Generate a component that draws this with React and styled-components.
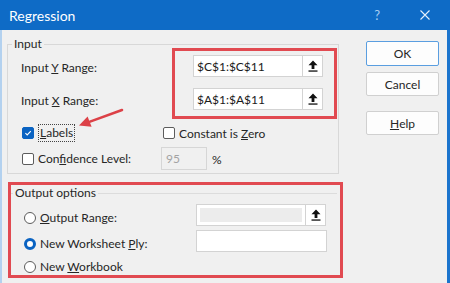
import React from 'react'
import styled, { createGlobalStyle } from 'styled-components'

const GlobalStyle = createGlobalStyle`
  html, body {
    margin: 0;
    padding: 0;
    background: #f0f0f0;
  }
  * {
    box-sizing: border-box;
  }
`

const UI_FONT = `Lato, 'Noto Sans', sans-serif`

export default function App() {
  return (
    <>
      <GlobalStyle />
      <Dialog>
        <TitleBar>
          <Title>Regression</Title>
          <TitleButtons>
            <HelpMark>?</HelpMark>
            <CloseMark viewBox="0 0 10 10">
              <path d="M0.5 0.5 L9.5 9.5 M9.5 0.5 L0.5 9.5" />
            </CloseMark>
          </TitleButtons>
        </TitleBar>
        <Body>
          <Main>
            <Group>
              <Legend>Input</Legend>
              <Rows $top={3} $bottom={3}>
                <Row>
                  <FieldLabel>Input <u>Y</u> Range:</FieldLabel>
                  <RefField value="$C$1:$C$11" />
                </Row>
                <Row $mt={11}>
                  <FieldLabel>Input <u>X</u> Range:</FieldLabel>
                  <RefField value="$A$1:$A$11" />
                </Row>
                <Row $mt={12} $h={22}>
                  <CheckItem $w={141}>
                    <CheckBox $checked>
                      <svg viewBox="0 0 10 10">
                        <path d="M2.4 5.2 L4.2 7 L7.8 3.2" />
                      </svg>
                    </CheckBox>
                    <FocusText><u>L</u>abels</FocusText>
                  </CheckItem>
                  <CheckItem>
                    <CheckBox />
                    <span>Constant is <u>Z</u>ero</span>
                  </CheckItem>
                </Row>
                <Row $mt={3} $h={23}>
                  <CheckItem $w={140}>
                    <CheckBox />
                    <span>Con<u>f</u>idence Level:</span>
                  </CheckItem>
                  <SmallBox>95</SmallBox>
                  <Percent>%</Percent>
                </Row>
              </Rows>
            </Group>

            <Highlight>
              <OutputGroup>
                <Legend $ml={2}>Output options</Legend>
                <Rows $top={3} $bottom={0}>
                  <Row $align="flex-end">
                    <RadioItem>
                      <Radio />
                      <span><u>O</u>utput Range:</span>
                    </RadioItem>
                    <RefField disabled />
                  </Row>
                  <Row $mt={4} $align="flex-end">
                    <RadioItem>
                      <Radio $checked />
                      <span>New Worksheet <u>P</u>ly:</span>
                    </RadioItem>
                    <TextBox $w={131} />
                  </Row>
                  <Row $mt={6} $h={17}>
                    <RadioItem>
                      <Radio />
                      <span>New <u>W</u>orkbook</span>
                    </RadioItem>
                  </Row>
                </Rows>
              </OutputGroup>
            </Highlight>
          </Main>

          <Side>
            <Button $default>OK</Button>
            <Button $mt={6}>Cancel</Button>
            <Button $mt={15}><u>H</u>elp</Button>
          </Side>

          <RedFrame />
          <Arrow viewBox="0 0 50 26">
            <path className="shaft" d="M46 6 L14 17.6" />
            <polygon points="3,21.5 15.6,22.8 11.6,12.6" />
          </Arrow>
        </Body>
      </Dialog>
    </>
  )
}

function RefField({ value, disabled }) {
  return (
    <FieldWrap>
      <TextBox $w={110}>
        {disabled ? <DisabledFill /> : value}
      </TextBox>
      <PickButton>
        <svg viewBox="0 0 10 12">
          <polygon points="5,0.5 9.5,5.2 6.4,5.2 6.4,9 3.6,9 3.6,5.2 0.5,5.2" />
          <rect x="0.5" y="10.4" width="9" height="1.3" />
        </svg>
      </PickButton>
    </FieldWrap>
  )
}

const Dialog = styled.div`
  width: 450px;
  height: 283px;
  display: flex;
  flex-direction: column;
  font-family: ${UI_FONT};
  font-size: 12px;
  color: #262626;
  background: #f0f0f0;
  overflow: hidden;
`

const TitleBar = styled.div`
  height: 30px;
  flex: none;
  display: flex;
  align-items: center;
  justify-content: space-between;
  background: #0e6bc6;
  color: #fff;
  padding-left: 9px;
`

const Title = styled.div`
  font-size: 14px;
`

const TitleButtons = styled.div`
  display: flex;
  align-items: center;
  gap: 40px;
  padding-right: 20px;
`

const HelpMark = styled.span`
  font-size: 13px;
  color: #a9cdf1;
`

const CloseMark = styled.svg`
  width: 10px;
  height: 10px;
  path {
    stroke: #e4f0fb;
    stroke-width: 1.1;
    fill: none;
  }
`

const Body = styled.div`
  flex: 1;
  position: relative;
  display: flex;
  border-left: 2px solid #b3d1ef;
  border-right: 3px solid #1b74cd;
`

const Main = styled.div`
  width: 341px;
  padding: 6px 0 0 5px;
  display: flex;
  flex-direction: column;
`

const Group = styled.fieldset`
  margin: 0;
  padding: 0;
  width: 332px;
  border: 1px solid #d8d8d8;
  min-width: 0;
`

const Legend = styled.legend`
  margin-left: ${p => p.$ml ?? 4}px;
  padding: 0 2px;
  line-height: 16px;
`

const Rows = styled.div`
  display: flex;
  flex-direction: column;
  padding: ${p => p.$top}px 0 ${p => p.$bottom}px 13px;
`

const Row = styled.div`
  display: flex;
  align-items: ${p => p.$align || 'center'};
  margin-top: ${p => p.$mt || 0}px;
  height: ${p => (p.$h ? `${p.$h}px` : 'auto')};
`

const FieldLabel = styled.div`
  width: 172px;
  padding-top: 2px;
`

const FieldWrap = styled.div`
  display: flex;
`

const TextBox = styled.div`
  width: ${p => p.$w}px;
  height: 22px;
  background: #fff;
  border: 1px solid #d3d3d3;
  padding: 0 3px;
  display: flex;
  align-items: center;
  color: #1a1a1a;
`

const DisabledFill = styled.div`
  flex: 1;
  height: 14px;
  background: #ececec;
`

const PickButton = styled.div`
  width: 21px;
  height: 22px;
  margin-left: -1px;
  background: #fff;
  border: 1px solid #d3d3d3;
  display: flex;
  align-items: center;
  justify-content: center;
  svg {
    width: 10px;
    height: 12px;
    fill: #111;
  }
`

const CheckItem = styled.label`
  display: flex;
  align-items: center;
  width: ${p => (p.$w ? `${p.$w}px` : 'auto')};
  padding-left: 1px;
`

const CheckBox = styled.span`
  width: 12px;
  height: 12px;
  flex: none;
  margin-right: 4px;
  border-radius: 2px;
  border: 1px solid ${p => (p.$checked ? '#0a63c2' : '#5c5c5c')};
  background: ${p => (p.$checked ? '#0a63c2' : '#fff')};
  display: flex;
  svg {
    width: 10px;
    height: 10px;
    path {
      stroke: #fff;
      stroke-width: 1.1;
      fill: none;
    }
  }
`

const FocusText = styled.span`
  border: 1px dotted #444;
  padding: 0 1px;
  line-height: 16px;
`

const SmallBox = styled.div`
  width: 46px;
  height: 23px;
  border: 1px solid #d6d6d6;
  background: #f0f0f0;
  color: #a3a3a3;
  padding: 0 4px;
  display: flex;
  align-items: center;
`

const Percent = styled.span`
  margin-left: 5px;
  padding-top: 2px;
`

const Highlight = styled.div`
  margin: 8px 0 0 1px;
  width: 335px;
  height: 96px;
  border: 3px solid #e14a51;
`

const OutputGroup = styled.fieldset`
  margin: 0 3px 0 0;
  padding: 0;
  border: none;
  border-top: 1px solid #dcdcdc;
  min-width: 0;
`

const RadioItem = styled.label`
  width: 172px;
  display: flex;
  align-items: center;
  line-height: 17px;
`

const Radio = styled.span`
  width: 12px;
  height: 12px;
  flex: none;
  margin-right: 4px;
  border-radius: 50%;
  background: #fff;
  border: ${p => (p.$checked ? '3.5px solid #0a63c2' : '1px solid #5c5c5c')};
`

const Side = styled.div`
  padding: 11px 0 0 23px;
  display: flex;
  flex-direction: column;
`

const Button = styled.div`
  width: 73px;
  height: ${p => (p.$default ? 25 : 24)}px;
  margin-top: ${p => p.$mt || 0}px;
  background: #fdfdfd;
  border: 1px solid ${p => (p.$default ? '#5a9ee0' : '#d0d0d0')};
  border-radius: 2px;
  display: flex;
  align-items: center;
  justify-content: center;
`

const RedFrame = styled.div`
  position: absolute;
  left: 170px;
  top: 18px;
  width: 165px;
  height: 71px;
  border: 3px solid #e14a51;
`

const Arrow = styled.svg`
  position: absolute;
  left: 74px;
  top: 74px;
  width: 50px;
  height: 26px;
  .shaft {
    stroke: #dc4147;
    stroke-width: 2.6;
    stroke-linecap: round;
    fill: none;
  }
  polygon {
    fill: #dc4147;
  }
`
